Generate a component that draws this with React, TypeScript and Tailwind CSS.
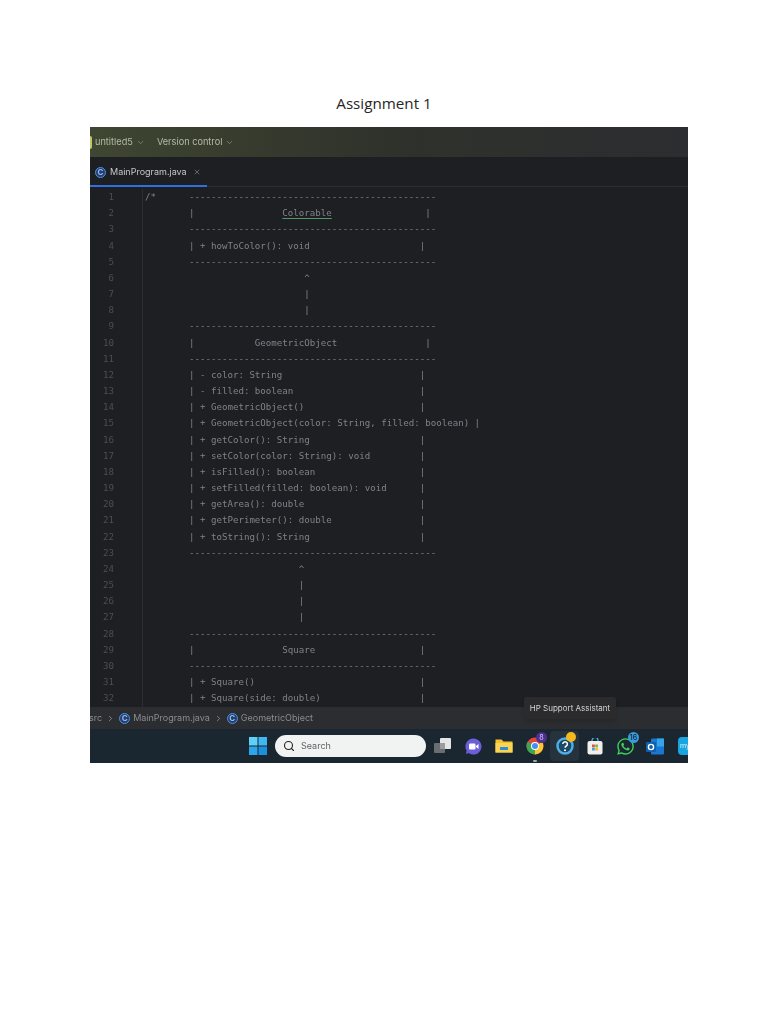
import React from "react"
import { ChevronDown, ChevronRight, Search, X } from "lucide-react"
import { FaWhatsapp } from "react-icons/fa"

const dash = "-".repeat(45)
const row = (text: string, end: number) => (" ".repeat(8) + text).padEnd(end) + "|"
const dashes = " ".repeat(8) + dash
const arrow = (col: number, mark: string) => " ".repeat(col) + mark

const lines: React.ReactNode[] = [
  "/*      " + dash,
  <>
    {"        |                "}
    <span className="underline decoration-[#4f9a63] underline-offset-2">Colorable</span>
    {"                 |"}
  </>,
  dashes,
  row("| + howToColor(): void", 50),
  dashes,
  arrow(29, "^"),
  arrow(29, "|"),
  arrow(29, "|"),
  dashes,
  row("|           GeometricObject", 51),
  dashes,
  row("| - color: String", 50),
  row("| - filled: boolean", 50),
  row("| + GeometricObject()", 50),
  row("| + GeometricObject(color: String, filled: boolean) ", 60),
  row("| + getColor(): String", 50),
  row("| + setColor(color: String): void", 50),
  row("| + isFilled(): boolean", 50),
  row("| + setFilled(filled: boolean): void", 50),
  row("| + getArea(): double", 50),
  row("| + getPerimeter(): double", 50),
  row("| + toString(): String", 50),
  dashes,
  arrow(28, "^"),
  arrow(28, "|"),
  arrow(28, "|"),
  arrow(28, "|"),
  dashes,
  row("|                Square", 50),
  dashes,
  row("| + Square()", 50),
  row("| + Square(side: double)", 50),
]

function ClassIcon() {
  return (
    <span className="flex h-[11px] w-[11px] shrink-0 items-center justify-center rounded-full border border-[#4d8fe8] bg-[#27406b] text-[8px] leading-none font-bold text-[#8fbcf5]">
      C
    </span>
  )
}

function WindowsLogo() {
  return (
    <svg width="18" height="18" viewBox="0 0 18 18" className="shrink-0">
      <rect x="0" y="0" width="8.5" height="8.5" fill="#5fd0f7" />
      <rect x="9.5" y="0" width="8.5" height="8.5" fill="#3db8f2" />
      <rect x="0" y="9.5" width="8.5" height="8.5" fill="#2ba6ea" />
      <rect x="9.5" y="9.5" width="8.5" height="8.5" fill="#1a90e0" />
    </svg>
  )
}

function TaskView() {
  return (
    <svg width="18" height="16" viewBox="0 0 18 16">
      <rect x="0" y="5" width="11" height="10" rx="1" fill="#6a6e72" />
      <rect x="6" y="0" width="11" height="11" rx="1" fill="#e4e5e6" />
      <rect x="6" y="5" width="5" height="6" fill="#9a9da0" />
    </svg>
  )
}

function MeetIcon() {
  return (
    <svg width="17" height="17" viewBox="0 0 17 17">
      <path d="M8.5 0.5a8 8 0 1 1-4.8 14.4L1 16l0.6-3.4A8 8 0 0 1 8.5 0.5z" fill="#6a5fd8" />
      <rect x="4" y="5.5" width="6.5" height="6" rx="1.2" fill="#fff" />
      <path d="M11 8l2.5-2v5L11 9z" fill="#fff" />
    </svg>
  )
}

function FolderIcon() {
  return (
    <svg width="18" height="16" viewBox="0 0 18 16">
      <path d="M0.5 1.5h6l2 2h9v11h-17z" fill="#f5c02e" />
      <rect x="0.5" y="5" width="17" height="9.5" fill="#fbd453" />
      <rect x="5" y="9" width="8" height="3" fill="#2d8fd5" />
    </svg>
  )
}

function ChromeIcon() {
  return (
    <svg width="18" height="18" viewBox="0 0 18 18">
      <circle cx="9" cy="9" r="8.5" fill="#e2463a" />
      <path d="M9 9L1.6 4.8A8.5 8.5 0 0 0 9 17.5z" fill="#3aa757" />
      <path d="M9 9v8.5A8.5 8.5 0 0 0 16.4 5z" fill="#fbc62f" />
      <circle cx="9" cy="9" r="4" fill="#fff" />
      <circle cx="9" cy="9" r="3" fill="#4a8df0" />
    </svg>
  )
}

function HelpIcon() {
  return (
    <svg width="18" height="18" viewBox="0 0 18 18">
      <circle cx="9" cy="9" r="7.5" fill="none" stroke="#4ab0ea" strokeWidth="2.5" />
      <circle cx="9" cy="9" r="6" fill="#1d4a66" />
      <path d="M6.8 7a2.3 2.3 0 1 1 3.5 2c-0.9 0.5-1.2 1-1.2 1.8" fill="none" stroke="#fff" strokeWidth="1.5" />
      <circle cx="9" cy="13.2" r="1" fill="#fff" />
    </svg>
  )
}

function StoreIcon() {
  return (
    <svg width="16" height="17" viewBox="0 0 16 17">
      <path d="M5 4V2.5a3 3 0 0 1 6 0V4" fill="none" stroke="#4fb7e8" strokeWidth="1.2" />
      <rect x="0.5" y="3" width="15" height="13.5" rx="2" fill="#f1efec" />
      <rect x="5" y="6.5" width="2.8" height="2.8" fill="#e8523a" />
      <rect x="8.2" y="6.5" width="2.8" height="2.8" fill="#7dbb3f" />
      <rect x="5" y="9.7" width="2.8" height="2.8" fill="#3aa4e8" />
      <rect x="8.2" y="9.7" width="2.8" height="2.8" fill="#f7b92e" />
    </svg>
  )
}

function OutlookIcon() {
  return (
    <svg width="18" height="17" viewBox="0 0 18 17">
      <rect x="5" y="0.5" width="13" height="16" rx="1.2" fill="#1a78d0" />
      <rect x="11" y="0.5" width="7" height="8" fill="#35a4ea" />
      <rect x="0" y="4" width="10" height="10" rx="1" fill="#0d5fb0" />
      <circle cx="5" cy="9" r="2.6" fill="none" stroke="#fff" strokeWidth="1.4" />
    </svg>
  )
}

function Badge({ text, className }: { text: string; className: string }) {
  return (
    <span className={`absolute flex items-center justify-center rounded-full text-[7px] leading-none font-medium ${className}`}>
      {text}
    </span>
  )
}

export default function App() {
  return (
    <div className="min-h-[1024px] bg-white pt-[92px] font-['Open_Sans',sans-serif]">
      <h1 className="h-[22px] text-center text-[15.2px] leading-[22px] text-[#262626]">Assignment 1</h1>
      <div className="relative mt-[13px] ml-[90px] flex h-[636px] w-[598px] flex-col overflow-hidden bg-[#1e1f22] font-['Inter',sans-serif] blur-[0.5px]">
        {/* toolbar */}
        <div className="flex h-[30px] shrink-0 items-center bg-gradient-to-r from-[#3f4631] via-[#2f322b] via-50% to-[#2b2d30] text-[9.2px] text-[#b5baa9]">
          <span className="h-[13px] w-[2px] rounded-r-sm bg-[#c5c56a]" />
          <span className="ml-[3px]">untitled5</span>
          <ChevronDown size={9} className="ml-[3px] text-[#8a8f80]" />
          <span className="ml-[12px]">Version control</span>
          <ChevronDown size={9} className="ml-[3px] text-[#8a8f80]" />
        </div>

        {/* tab bar */}
        <div className="flex h-[30px] shrink-0 border-b border-[#2b2d30]">
          <div className="flex h-[30px] w-[117px] items-center border-b-2 border-[#2f6fdf] pt-[2px] pl-[5px] text-[9px] text-[#c4c7cc]">
            <ClassIcon />
            <span className="ml-[4px]">MainProgram.java</span>
            <X size={8} className="ml-[6px] text-[#85888d]" />
          </div>
        </div>

        {/* editor */}
        <div className="flex min-h-0 flex-1 overflow-hidden pt-[2px] font-['DejaVu_Sans_Mono',monospace] text-[9.13px] leading-[16.17px]">
          <div className="w-[24px] shrink-0 text-right text-[#4b4e54]">
            {lines.map((_, i) => (
              <div key={i}>{i + 1}</div>
            ))}
          </div>
          <div className="mr-[1px] ml-[28px] w-px shrink-0 bg-[#2b2d30]" />
          <div className="ml-[1px] whitespace-pre text-[#7f8288]">
            {lines.map((line, i) => (
              <div key={i}>{line}</div>
            ))}
          </div>
        </div>

        {/* breadcrumbs */}
        <div className="flex h-[22px] shrink-0 items-center bg-[#2b2d30] text-[9px] text-[#8a8d92]">
          <span className="ml-[-1px]">src</span>
          <ChevronRight size={9} className="mx-[4px] text-[#9a9da2]" />
          <ClassIcon />
          <span className="ml-[3px]">MainProgram.java</span>
          <ChevronRight size={9} className="mx-[4px] text-[#9a9da2]" />
          <ClassIcon />
          <span className="ml-[3px]">GeometricObject</span>
        </div>

        {/* taskbar */}
        <div className="flex h-[34px] shrink-0 items-center bg-[#1a2630] pl-[159px]">
          <WindowsLogo />
          <div className="ml-[8px] flex h-[22px] w-[151px] shrink-0 items-center rounded-full bg-[#f1f2f2] pl-[8px] text-[9px] text-[#5f6368]">
            <Search size={12} strokeWidth={2.2} className="text-[#222]" />
            <span className="ml-[6px]">Search</span>
          </div>
          <div className="ml-[2px] flex h-full items-center">
            <div className="flex w-[30px] justify-center"><TaskView /></div>
            <div className="flex w-[30px] justify-center"><MeetIcon /></div>
            <div className="flex w-[31px] justify-center"><FolderIcon /></div>
            <div className="relative flex h-full w-[31px] items-center justify-center">
              <ChromeIcon />
              <Badge text="8" className="top-[3px] right-[3px] h-[11px] w-[11px] bg-[#4c2f8f] text-[#c9b8f0]" />
              <span className="absolute bottom-[1px] h-[2px] w-[4px] rounded-full bg-[#a0a4a8]" />
            </div>
            <div className="relative flex h-[30px] w-[29px] items-center justify-center rounded-sm bg-[#26333c]">
              <HelpIcon />
              <Badge text="" className="top-[1px] right-[3px] h-[10px] w-[10px] bg-[#f5b81f]" />
            </div>
            <div className="flex w-[31px] justify-center"><StoreIcon /></div>
            <div className="relative flex h-full w-[30px] items-center justify-center">
              <FaWhatsapp size={19} className="text-[#3fcf5c]" />
              <Badge text="16" className="top-[3px] right-[1px] h-[11px] w-[11px] bg-[#3a9bdc] text-[#0f2230]" />
            </div>
            <div className="flex w-[30px] justify-center"><OutlookIcon /></div>
            <div className="ml-[8px] flex h-[18px] w-[20px] shrink-0 items-center rounded-sm bg-[#18a5e0] pl-[2px] text-[7px] text-[#dff3fb]">my</div>
          </div>
        </div>

        {/* tooltip */}
        <div className="absolute top-[570px] left-[434px] flex h-[22px] w-[92px] items-center justify-center rounded-[3px] bg-[#2b2b2d] text-[8px] whitespace-nowrap text-[#d4d4d6] shadow-md">
          HP Support Assistant
        </div>
      </div>
    </div>
  )
}
